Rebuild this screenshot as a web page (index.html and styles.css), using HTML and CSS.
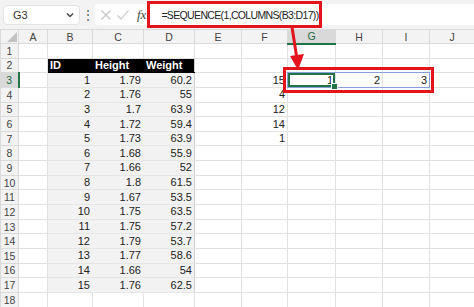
FILE: index.html
```html
<!DOCTYPE html>
<html lang="en">
<head>
    <meta charset="UTF-8">
    <meta name="viewport" content="width=device-width, initial-scale=1.0">
    <title>SEQUENCE with COLUMNS</title>
    <link rel="stylesheet" href="styles.css">
</head>
<body>
<div class="page">
    <div class="formula-bar">
        <div class="name-box">
            <span>G3</span>
            <svg width="8" height="6" viewBox="0 0 8 6"><path d="M1 1.5 L4 4.5 L7 1.5" fill="none" stroke="#444" stroke-width="1.4"/></svg>
        </div>
        <div class="grip">&#8942;</div>
        <div class="formula-box">
            <svg class="icon-x" width="10" height="10" viewBox="0 0 10 10"><path d="M0.5 0.5 L9.5 9.5 M9.5 0.5 L0.5 9.5" stroke="#c4c4c4" stroke-width="1.1"/></svg>
            <svg class="icon-check" width="12" height="10" viewBox="0 0 12 10"><path d="M0.5 5.5 L4 9 L11.5 0.5" fill="none" stroke="#c4c4c4" stroke-width="1.1"/></svg>
            <span class="fx">fx</span>
            <span class="formula">=SEQUENCE(1,COLUMNS(B3:D17))</span>
        </div>
    </div>

    <table class="sheet">
        <colgroup>
            <col style="width:18px"><col style="width:29px"><col style="width:45px"><col style="width:51px">
            <col style="width:51px"><col style="width:47px"><col style="width:46px"><col style="width:48px">
            <col style="width:47px"><col style="width:47px"><col style="width:45px">
        </colgroup>
        <tr class="col-head">
            <th class="corner"><svg width="10" height="10" viewBox="0 0 10 10"><path d="M10 0 L10 10 L0 10 Z" fill="#c2c2c2"/></svg></th>
            <th>A</th><th>B</th><th>C</th><th>D</th><th>E</th><th>F</th><th class="active">G</th><th>H</th><th>I</th><th>J</th>
        </tr>
        <tr><th>1</th><td></td><td></td><td></td><td></td><td></td><td></td><td></td><td></td><td></td><td></td></tr>
        <tr><th>2</th><td></td><td class="hd">ID</td><td class="hd">Height</td><td class="hd last">Weight</td><td></td><td></td><td></td><td></td><td></td><td></td></tr>
        <tr><th class="active">3</th><td></td><td class="t">1</td><td class="t">1.79</td><td class="t last">60.2</td><td></td><td class="n">15</td><td class="n sel"><span class="spill"></span>1</td><td class="n">2</td><td class="n">3</td><td></td></tr>
        <tr><th>4</th><td></td><td class="t">2</td><td class="t">1.76</td><td class="t last">55</td><td></td><td class="n">4</td><td></td><td></td><td></td><td></td></tr>
        <tr><th>5</th><td></td><td class="t">3</td><td class="t">1.7</td><td class="t last">63.9</td><td></td><td class="n">12</td><td></td><td></td><td></td><td></td></tr>
        <tr><th>6</th><td></td><td class="t">4</td><td class="t">1.72</td><td class="t last">59.4</td><td></td><td class="n">14</td><td></td><td></td><td></td><td></td></tr>
        <tr><th>7</th><td></td><td class="t">5</td><td class="t">1.73</td><td class="t last">63.9</td><td></td><td class="n">1</td><td></td><td></td><td></td><td></td></tr>
        <tr><th>8</th><td></td><td class="t">6</td><td class="t">1.68</td><td class="t last">55.9</td><td></td><td></td><td></td><td></td><td></td><td></td></tr>
        <tr><th>9</th><td></td><td class="t">7</td><td class="t">1.66</td><td class="t last">52</td><td></td><td></td><td></td><td></td><td></td><td></td></tr>
        <tr><th>10</th><td></td><td class="t">8</td><td class="t">1.8</td><td class="t last">61.5</td><td></td><td></td><td></td><td></td><td></td><td></td></tr>
        <tr><th>11</th><td></td><td class="t">9</td><td class="t">1.67</td><td class="t last">53.5</td><td></td><td></td><td></td><td></td><td></td><td></td></tr>
        <tr><th>12</th><td></td><td class="t">10</td><td class="t">1.75</td><td class="t last">63.5</td><td></td><td></td><td></td><td></td><td></td><td></td></tr>
        <tr><th>13</th><td></td><td class="t">11</td><td class="t">1.75</td><td class="t last">57.2</td><td></td><td></td><td></td><td></td><td></td><td></td></tr>
        <tr><th>14</th><td></td><td class="t">12</td><td class="t">1.79</td><td class="t last">53.7</td><td></td><td></td><td></td><td></td><td></td><td></td></tr>
        <tr><th>15</th><td></td><td class="t">13</td><td class="t">1.77</td><td class="t last">58.6</td><td></td><td></td><td></td><td></td><td></td><td></td></tr>
        <tr><th>16</th><td></td><td class="t">14</td><td class="t">1.66</td><td class="t last">54</td><td></td><td></td><td></td><td></td><td></td><td></td></tr>
        <tr><th>17</th><td></td><td class="t">15</td><td class="t">1.76</td><td class="t last">62.5</td><td></td><td></td><td></td><td></td><td></td><td></td></tr>
        <tr><th>18</th><td></td><td></td><td></td><td></td><td></td><td></td><td></td><td></td><td></td><td></td></tr>
    </table>

    <!-- red annotations drawn over the screenshot -->
    <div class="mark mark-formula"></div>
    <div class="mark mark-spill"></div>
    <svg class="arrow" width="20" height="46" viewBox="0 0 20 46">
        <path d="M4 0 L9 32" stroke="#e3141c" stroke-width="3" fill="none"/>
        <path d="M2 29 L16 27 L10 43 Z" fill="#e3141c"/>
    </svg>
</div>
</body>
</html>
```

FILE: styles.css
```css
* {
    margin: 0;
    padding: 0;
    box-sizing: border-box;
}

body {
    background: #ffffff;
    font-family: 'Liberation Sans', Arial, sans-serif;
    color: #222;
    overflow: hidden;
}

.page {
    position: relative;
    width: 474px;
    height: 307px;
    overflow: hidden;
}

/* formula bar */
.formula-bar {
    height: 29px;
    background: #f3f3f3;
    display: flex;
    align-items: center;
    padding-left: 3px;
}

.name-box {
    width: 77px;
    height: 20px;
    background: #fff;
    border: 1px solid #e3e3e3;
    border-radius: 4px;
    display: flex;
    align-items: center;
    justify-content: space-between;
    padding: 0 5px 0 9px;
    font-size: 11px;
    color: #333;
}

.grip {
    width: 15px;
    text-align: center;
    font-size: 12px;
    color: #555;
}

.formula-box {
    flex: 1;
    height: 21px;
    background: #fff;
    border-radius: 4px 0 0 4px;
    display: flex;
    align-items: center;
    padding-left: 6px;
}

.icon-check {
    margin-left: 6px;
}

.fx {
    margin-left: 8px;
    font-family: 'Liberation Serif', 'Times New Roman', serif;
    font-style: italic;
    font-size: 13px;
    color: #444;
}

.formula {
    margin-left: 15px;
    font-size: 10.5px;
    letter-spacing: -0.65px;
    color: #222;
}

/* grid */
.sheet {
    border-collapse: collapse;
    table-layout: fixed;
    width: 474px;
    font-size: 11px;
}

.sheet tr {
    height: 14.65px;
}

.sheet .col-head {
    height: 14px;
}

.sheet th {
    background: #f3f3f3;
    color: #444;
    font-weight: normal;
    font-size: 10.5px;
    text-align: center;
    border: 1px solid #dadada;
    padding: 0;
}

.sheet th.corner {
    text-align: right;
    vertical-align: bottom;
    padding: 0 1px 1px 0;
    line-height: 0;
}

.sheet th.active {
    background: #d9d9d9;
    color: #1e6b41;
}

.col-head th.active {
    border-bottom: 2px solid #217346;
}

.sheet tr th.active:first-child {
    border-right: 2px solid #217346;
}

.sheet td {
    border: 1px solid #e2e2e2;
    padding: 0 2px;
    white-space: nowrap;
    line-height: 1;
}

.sheet td.hd {
    background: #000;
    color: #fff;
    font-weight: bold;
    border-color: #000;
    padding-left: 2px;
}

.sheet td.t {
    background: #f2f2f2;
    text-align: right;
    border-left-color: #f2f2f2;
    border-right-color: #f2f2f2;
    border-bottom-color: #e6e6e6;
}

.sheet td.last {
    border-right-color: #d0d0d0;
}

.sheet td.n {
    text-align: right;
}

.sheet td.sel {
    position: relative;
    box-shadow: inset 0 0 0 2px #217346;
}

.sel::after {
    content: "";
    position: absolute;
    right: -3px;
    bottom: -3px;
    width: 5px;
    height: 5px;
    background: #217346;
    border: 1px solid #fff;
}

.spill {
    position: absolute;
    left: -1px;
    top: -1px;
    width: 143px;
    height: 16px;
    border: 1px solid #8a9fd8;
}

/* annotations */
.mark {
    position: absolute;
    border: 3px solid #e3141c;
}

.mark-formula {
    left: 147px;
    top: 1px;
    width: 175px;
    height: 27px;
}

.mark-spill {
    left: 283px;
    top: 67px;
    width: 151px;
    height: 26px;
}

.arrow {
    position: absolute;
    left: 288px;
    top: 27px;
}
```
